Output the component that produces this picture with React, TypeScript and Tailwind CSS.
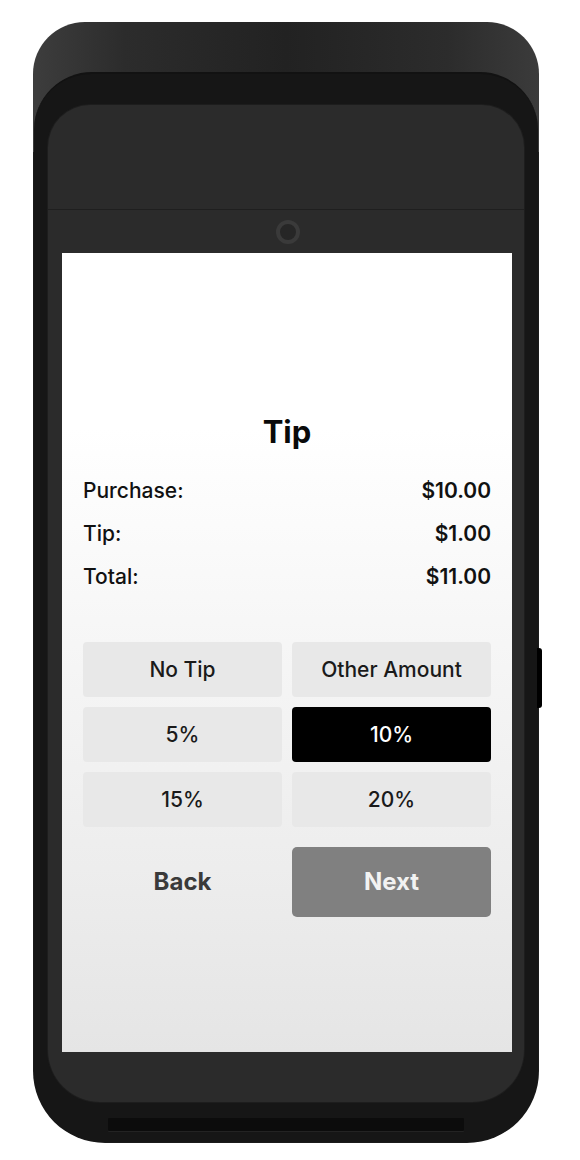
import React from "react";

const font = { fontFamily: "Inter, 'Noto Sans', sans-serif" };

function Row({ label, value }: { label: string; value: string }) {
  return (
    <div className="flex items-center justify-between h-[28px] text-[21px] text-[#111111]">
      <span className="font-medium">{label}</span>
      <span className="font-semibold">{value}</span>
    </div>
  );
}

function TipButton({ label, selected }: { label: string; selected?: boolean }) {
  return (
    <button
      className={
        selected
          ? "h-[55px] rounded-[4px] bg-black text-white text-[21px] font-medium flex items-center justify-center"
          : "h-[55px] rounded-[4px] bg-[#e8e8e8] text-[#1a1a1a] text-[21px] font-medium flex items-center justify-center"
      }
    >
      {label}
    </button>
  );
}

export default function App() {
  return (
    <div className="w-[580px] h-[1160px] bg-white pt-[22px] pl-[33px]" style={font}>
      <div className="relative w-[506px] h-[1121px] rounded-t-[52px] rounded-b-[72px] flex flex-col bg-[linear-gradient(to_bottom,rgba(0,0,0,0)_0px,rgba(0,0,0,0)_130px,#1b1b1b_130px),linear-gradient(to_right,#3d3d3d,#2c2c2c_18%,#222222_50%,#2c2c2c_82%,#3b3b3b)]">
        <div className="h-[50px] shrink-0" />
        <div className="mx-[1px] mb-[1px] h-[1070px] rounded-t-[58px] rounded-b-[70px] bg-[#161616] px-[14px] pt-[31px] pb-[11px] flex flex-col border-t-[2px] border-[#121212]">
          <div className="h-[999px] rounded-t-[42px] rounded-b-[52px] bg-[#2b2b2b] flex flex-col shadow-[0_0_0_1px_#1d1d1d]">
            <div className="h-[105px] border-b border-[#1f1f1f]" />
            <div className="h-[43px] flex items-center justify-center pl-[4px]">
              <div className="w-[24px] h-[24px] rounded-full border-[4px] border-[#3a3a3a] bg-[#262626]" />
            </div>
            <div className="ml-[14px] w-[450px] h-[799px] bg-[linear-gradient(to_bottom,#ffffff_0%,#ffffff_22%,#f4f4f4_55%,#ececec_80%,#e5e5e5_100%)] px-[21px] pt-[160px] flex flex-col">
              <div className="h-[38px] flex items-center justify-center text-[31px] font-bold text-[#0a0a0a]">
                Tip
              </div>
              <div className="mt-[26px] flex flex-col gap-[15px]">
                <Row label="Purchase:" value="$10.00" />
                <Row label="Tip:" value="$1.00" />
                <Row label="Total:" value="$11.00" />
              </div>
              <div className="mt-[51px] grid grid-cols-2 gap-x-[10px] gap-y-[10px]">
                <TipButton label="No Tip" />
                <TipButton label="Other Amount" />
                <TipButton label="5%" />
                <TipButton label="10%" selected />
                <TipButton label="15%" />
                <TipButton label="20%" />
              </div>
              <div className="mt-[20px] grid grid-cols-2 gap-x-[10px]">
                <button className="h-[70px] flex items-center justify-center text-[24px] font-bold text-[#3a3a3a]">
                  Back
                </button>
                <button className="h-[70px] rounded-[5px] bg-[#808080] flex items-center justify-center text-[24px] font-bold text-[#f2f2f2]">
                  Next
                </button>
              </div>
            </div>
            <div className="flex-1" />
          </div>
          <div className="mt-[16px] mx-auto w-[356px] h-[13px] bg-[#0c0c0c] rounded-[1px] shadow-[0_1px_0_#232323]" />
        </div>
        <div className="absolute right-[-3px] top-[626px] w-[5px] h-[60px] bg-black rounded-r-[3px]" />
      </div>
    </div>
  );
}
